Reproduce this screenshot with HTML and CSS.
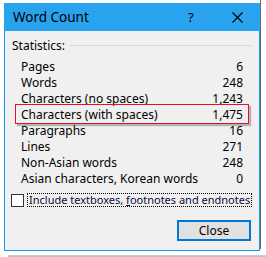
FILE: index.html
```html
<!DOCTYPE html>
<html>
<head>
<meta charset="utf-8">
<link rel="stylesheet" href="styles.css">
</head>
<body>
<div class="stage">
  <div class="window">
    <div class="titlebar">
      <span class="title">Word Count</span>
      <span class="help">?</span>
      <svg class="close-x" width="11" height="11" viewBox="0 0 11 11"><path d="M0.5 0.5 L10.5 10.5 M10.5 0.5 L0.5 10.5" stroke="#000" stroke-width="1.1" fill="none"/></svg>
    </div>
    <div class="content">
      <div class="group-head"><span>Statistics:</span><span class="rule"></span></div>
      <div class="rows">
        <div class="row"><span>Pages</span><span>6</span></div>
        <div class="row"><span>Words</span><span>248</span></div>
        <div class="row"><span>Characters (no spaces)</span><span>1,243</span></div>
        <div class="row hl"><span>Characters (with spaces)</span><span>1,475</span></div>
        <div class="row"><span>Paragraphs</span><span>16</span></div>
        <div class="row"><span>Lines</span><span>271</span></div>
        <div class="row"><span>Non-Asian words</span><span>248</span></div>
        <div class="row"><span>Asian characters, Korean words</span><span>0</span></div>
      </div>
      <div class="check-row">
        <span class="checkbox"></span>
        <span class="check-label">Include textboxes, <u>f</u>ootnotes and endnotes</span>
      </div>
      <div class="actions">
        <button class="btn">Close</button>
      </div>
    </div>
  </div>
  <div class="edge"></div>
</div>
<div class="shadow"></div>
</body>
</html>
```

FILE: styles.css
```css
html, body {
  margin: 0;
  padding: 0;
  background: #ffffff;
}
body {
  font-family: "Noto Sans", "Open Sans", sans-serif;
  font-size: 12px;
  color: #000;
  width: 266px;
  height: 257px;
  overflow: hidden;
}
.stage {
  display: flex;
  align-items: flex-start;
  padding-left: 4px;
  padding-top: 3px;
}
.window {
  width: 256px;
  box-sizing: border-box;
  border-left: 1px solid #1a98ee;
  border-right: 1px solid #1a98ee;
  border-bottom: 1px solid #1a98ee;
  background: #f0f0f0;
}
.edge {
  width: 1px;
  height: 249px;
  margin-top: -3px;
  background: #6b6b6b;
}
.titlebar {
  height: 28px;
  background: #2aa3ef;
  display: flex;
  align-items: center;
  margin: 0 -1px;
  padding-left: 9px;
}
.title {
  font-size: 13.5px;
  flex: 1;
}
.help {
  font-size: 13px;
  width: 44px;
}
.close-x {
  margin-right: 17px;
}
.content {
  padding: 6px 7px 9px 7px;
}
.group-head {
  display: flex;
  align-items: center;
  height: 16px;
}
.rule {
  flex: 1;
  height: 1px;
  background: #d8d8d8;
  margin-left: 5px;
}
.rows {
  margin-top: 6px;
  padding-left: 9px;
  padding-right: 9px;
}
.row {
  display: flex;
  justify-content: space-between;
  height: 16px;
  line-height: 16px;
}
.hl {
  position: relative;
}
.hl::after {
  content: "";
  position: absolute;
  left: -6px;
  right: -6px;
  top: -3px;
  bottom: -1px;
  border: 1px solid #e8112d;
  box-shadow: 2px 2px 1px rgba(0,0,0,0.25);
}
.check-row {
  display: flex;
  align-items: center;
  margin-top: 6px;
  height: 14px;
}
.checkbox {
  flex-shrink: 0;
  width: 11px;
  height: 11px;
  border: 1px solid #333;
  background: #fff;
  margin-left: -1px;
}
.check-label {
  margin-left: 3px;
  border: 1px dotted #000;
  padding: 0 1px;
  font-size: 11px;
  line-height: 12px;
  height: 12px;
  color: #0d0a3a;
  white-space: nowrap;
}
.actions {
  display: flex;
  justify-content: flex-end;
  margin-top: 13px;
}
.btn {
  width: 74px;
  height: 21px;
  margin-right: 1px;
  border: 2px solid #0078d7;
  background: #e1e1e1;
  font-family: inherit;
  font-size: 12px;
  padding: 0;
  color: #000;
}
.shadow {
  margin-top: 4px;
  margin-left: 8px;
  height: 4px;
  background: linear-gradient(#d0d0d0, #a8a8a8);
}
```
